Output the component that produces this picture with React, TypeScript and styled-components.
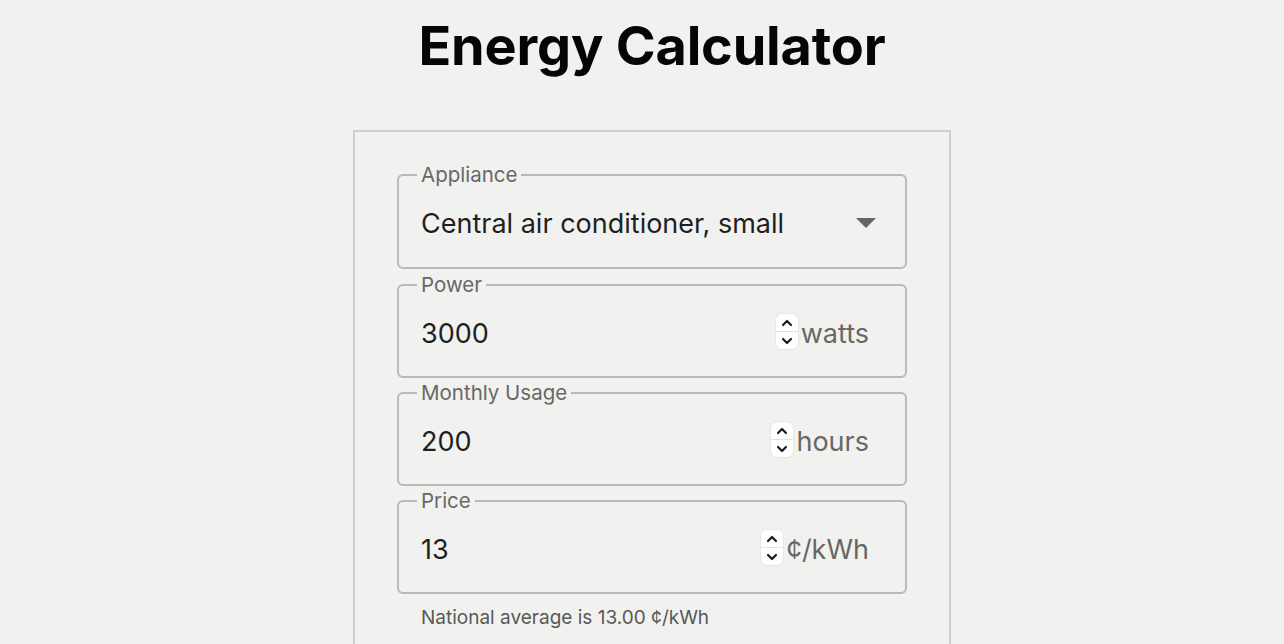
import React from 'react'
import styled, { createGlobalStyle } from 'styled-components'

const GlobalStyle = createGlobalStyle`
  html, body {
    margin: 0;
    padding: 0;
    background: #f1f2ef;
    font-family: Inter, "Noto Sans", sans-serif;
    color: #1f1f1f;
  }
`

interface IField {
  label: string
  value: string
  unit: string
}

const fields: IField[] = [
  { label: 'Power', value: '3000', unit: 'watts' },
  { label: 'Monthly Usage', value: '200', unit: 'hours' },
  { label: 'Price', value: '13', unit: '¢/kWh' },
]

function Spinner() {
  return (
    <SpinBox>
      <SpinHalf>
        <svg width="12" height="8" viewBox="0 0 12 8">
          <path d="M2 6 L6 2 L10 6" fill="none" stroke="#1c1c1c" strokeWidth="2.2" strokeLinecap="round" strokeLinejoin="round" />
        </svg>
      </SpinHalf>
      <SpinHalf $bottom>
        <svg width="12" height="8" viewBox="0 0 12 8">
          <path d="M2 2 L6 6 L10 2" fill="none" stroke="#1c1c1c" strokeWidth="2.2" strokeLinecap="round" strokeLinejoin="round" />
        </svg>
      </SpinHalf>
    </SpinBox>
  )
}

export default function App() {
  return (
    <Page>
      <GlobalStyle />
      <Title>Energy Calculator</Title>
      <Card>
        <Field $select>
          <Legend>Appliance</Legend>
          <Row>
            <Value>Central air conditioner, small</Value>
            <Caret viewBox="0 0 20 10" width="20" height="10">
              <path d="M0 0 L20 0 L10 10 Z" fill="#666" />
            </Caret>
          </Row>
        </Field>
        {fields.map((f) => (
          <Field key={f.label}>
            <Legend>{f.label}</Legend>
            <Row>
              <Value>{f.value}</Value>
              <Spinner />
              <Unit>{f.unit}</Unit>
            </Row>
          </Field>
        ))}
        <Hint>National average is 13.00 ¢/kWh</Hint>
      </Card>
    </Page>
  )
}

const Page = styled.div`
  display: flex;
  flex-direction: column;
  align-items: center;
  height: 644px;
  padding-left: 20px;
  overflow: hidden;
`

const Title = styled.h1`
  margin: 10px 0 0;
  font-size: 54px;
  font-weight: 700;
  letter-spacing: -0.2px;
  line-height: 72px;
  color: #050505;
`

const Card = styled.div`
  margin-top: 48px;
  width: 510px;
  padding: 31px 42px 40px;
  border: 2px solid #cfd0cd;
  display: flex;
  flex-direction: column;
  gap: 3px;
`

const Field = styled.fieldset<{ $select?: boolean }>`
  margin: 0 0 ${(p) => (p.$select ? '1px' : '0')};
  padding: 0 36px ${(p) => (p.$select ? '8px' : '7px')} 22px;
  border: 2px solid #b9bab7;
  border-radius: 6px;
`

const Legend = styled.legend`
  margin-left: -4px;
  padding: 0 4px;
  font-size: 20.5px;
  line-height: 24px;
  color: #676866;
`

const Row = styled.div`
  display: flex;
  align-items: center;
  height: 72px;
`

const Value = styled.span`
  flex: 1;
  font-size: 27px;
  color: #1f1f1f;
`

const Unit = styled.span`
  font-size: 27px;
  color: #676866;
`

const Caret = styled.svg`
  margin-right: -7px;
`

const SpinBox = styled.div`
  display: flex;
  flex-direction: column;
  width: 22px;
  height: 35px;
  margin-top: -3px;
  margin-right: 3px;
  background: #fff;
  border-radius: 6px;
  box-shadow: 0 0 0 1px #e6e6e4;
  overflow: hidden;
`

const SpinHalf = styled.div<{ $bottom?: boolean }>`
  flex: 1;
  display: flex;
  align-items: center;
  justify-content: center;
  border-top: ${(p) => (p.$bottom ? '1px solid #e2e2e0' : 'none')};
`

const Hint = styled.div`
  margin-top: 9px;
  padding-left: 24px;
  font-size: 19px;
  line-height: 24px;
  color: #585957;
`
